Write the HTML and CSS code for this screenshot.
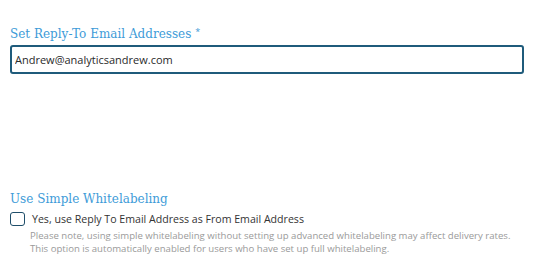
FILE: index.html
```html
<!DOCTYPE html>
<html>
<head>
<meta charset="utf-8">
<title>Reply-To settings</title>
<link rel="stylesheet" href="styles.css">
</head>
<body>
<div class="settings">
	<div class="field">
		<label class="fieldTitle" for="replyTo">Set Reply-To Email Addresses <span class="req">*</span></label>
		<input type="text" id="replyTo" class="textInput" value="Andrew@analyticsandrew.com">
	</div>
	<div class="field whitelabel">
		<div class="fieldTitle">Use Simple Whitelabeling</div>
		<label class="check" for="simpleWl">
			<input type="checkbox" id="simpleWl">
			<span class="box"></span>
			<span class="checkText">Yes, use Reply To Email Address as From Email Address</span>
		</label>
		<p class="note">Please note, using simple whitelabeling without setting up advanced whitelabeling may affect delivery rates.<br>This option is automatically enabled for users who have set up full whitelabeling.</p>
	</div>
</div>
</body>
</html>
```
FILE: styles.css
```css
html, body {
	margin: 0;
	padding: 0;
	background: white;
}
body {
	font-family: "Open Sans", Arial, sans-serif;
	color: #333;
}
div.settings {
	padding: 26px 11px 0 10px;
}
.fieldTitle {
	display: block;
	font-family: "DejaVu Serif", serif;
	font-size: 12px;
	line-height: 16px;
	height: 16px;
	color: #3d9bd8;
	margin-bottom: 3px;
}
.fieldTitle .req {
	font-family: "Open Sans", sans-serif;
	font-size: 9px;
	line-height: 0;
	vertical-align: 3px;
}
input.textInput {
	display: block;
	box-sizing: border-box;
	width: 514px;
	height: 29px;
	margin: 0;
	padding: 0 3px;
	border: 2px solid #1f5b7b;
	border-radius: 3px;
	font-family: "Open Sans", sans-serif;
	font-size: 11px;
	color: #2a2a2a;
	outline: none;
}
div.whitelabel {
	margin-top: 117px;
}
label.check {
	display: flex;
	align-items: center;
	gap: 7px;
	font-size: 10.6px;
	color: #333;
	margin-top: 5px;
}
label.check input {
	display: none;
}
span.box {
	box-sizing: border-box;
	width: 15px;
	height: 14px;
	border: 1.5px solid #1f4e6a;
	border-radius: 3px;
}
p.note {
	margin: 3px 0 0 20px;
	font-size: 9.6px;
	line-height: 13px;
	color: #9a9a9a;
}
```
